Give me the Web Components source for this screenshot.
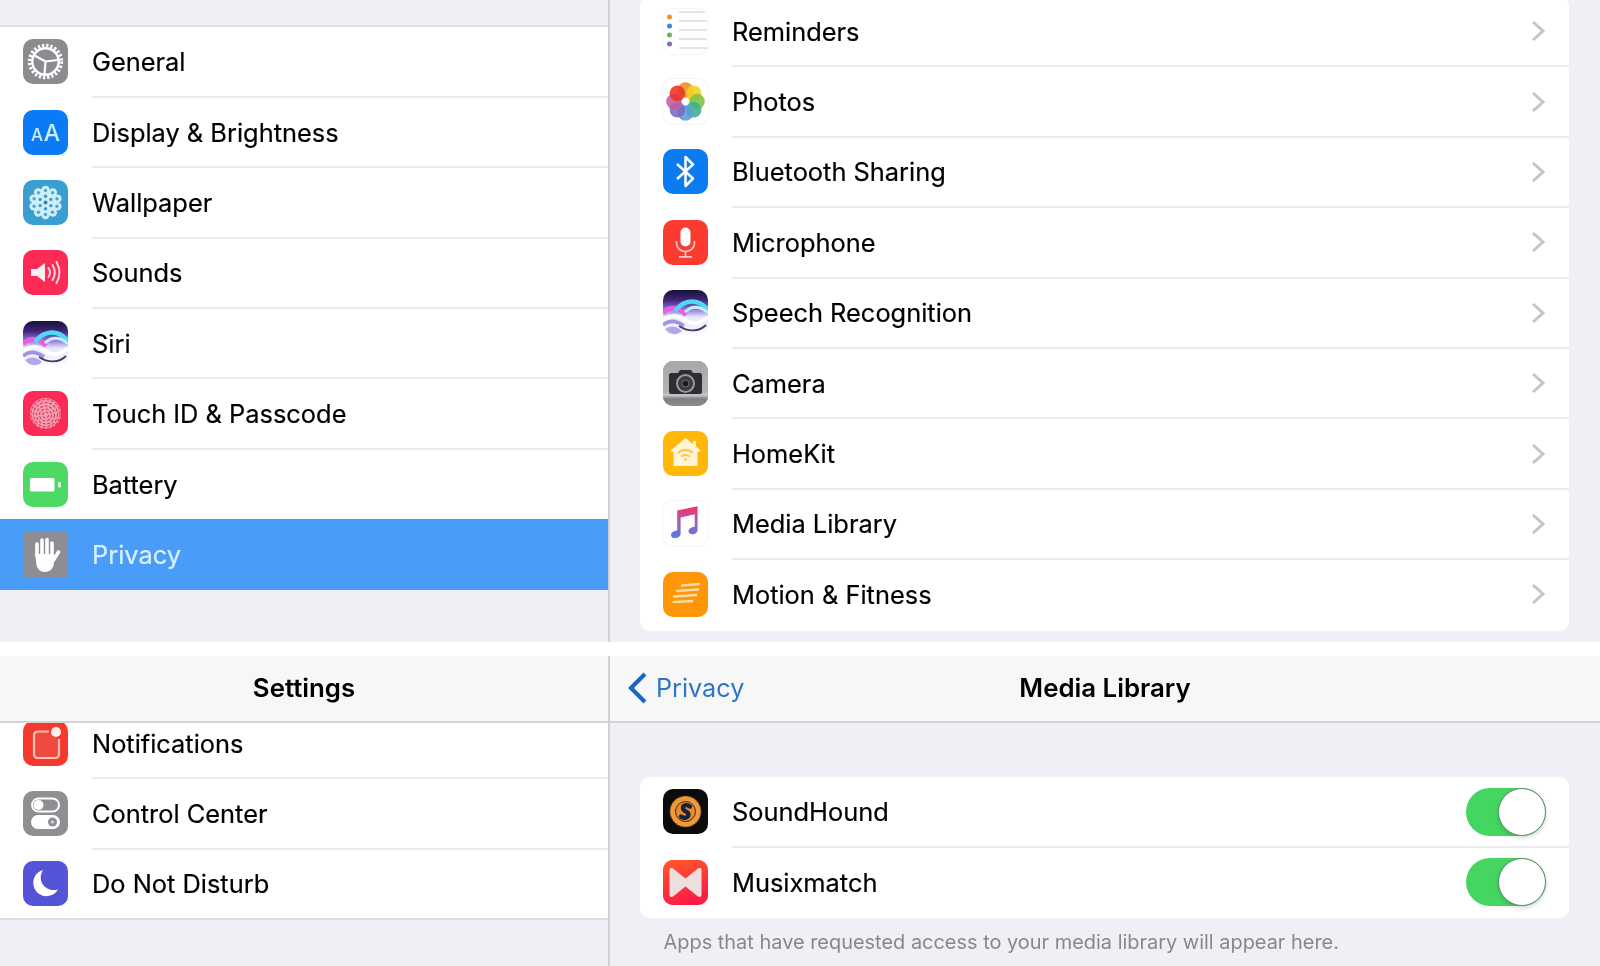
<!DOCTYPE html>
<html>
<head>
<meta charset="utf-8">
<title>Settings</title>
<style>
  html, body { margin: 0; height: 100%; background: #fff; overflow: hidden; }
  body { font-family: Inter, "Liberation Sans", sans-serif; color: #000; filter: blur(0.5px); }
  .band { height: 14px; }
</style>
</head>
<body>
<split-shot height="642">
  <settings-list slot="left" top="26.5">
    <settings-row icon="general">General</settings-row>
    <settings-row icon="display">Display &amp; Brightness</settings-row>
    <settings-row icon="wallpaper">Wallpaper</settings-row>
    <settings-row icon="sounds">Sounds</settings-row>
    <settings-row icon="siri">Siri</settings-row>
    <settings-row icon="touch">Touch ID &amp; Passcode</settings-row>
    <settings-row icon="battery" last>Battery</settings-row>
    <settings-row icon="privacy" selected last>Privacy</settings-row>
  </settings-list>
  <settings-card slot="right" shift="-4">
    <settings-row icon="reminders" chevron>Reminders</settings-row>
    <settings-row icon="photos" chevron>Photos</settings-row>
    <settings-row icon="bluetooth" chevron>Bluetooth Sharing</settings-row>
    <settings-row icon="mic" chevron>Microphone</settings-row>
    <settings-row icon="siri" chevron>Speech Recognition</settings-row>
    <settings-row icon="camera" chevron>Camera</settings-row>
    <settings-row icon="home" chevron>HomeKit</settings-row>
    <settings-row icon="music" chevron>Media Library</settings-row>
    <settings-row icon="motion" chevron last>Motion &amp; Fitness</settings-row>
  </settings-card>
</split-shot>
<div class="band"></div>
<split-shot height="310">
  <nav-bar slot="left-nav"><span>Settings</span></nav-bar>
  <nav-bar slot="right-nav" back="Privacy"><span>Media Library</span></nav-bar>
  <settings-list slot="left" shift="-15" bottom-line>
    <settings-row icon="notifications">Notifications</settings-row>
    <settings-row icon="control">Control Center</settings-row>
    <settings-row icon="dnd" last>Do Not Disturb</settings-row>
  </settings-list>
  <settings-card slot="right" top="53.5">
    <settings-row icon="soundhound" toggle>SoundHound</settings-row>
    <settings-row icon="musixmatch" toggle last>Musixmatch</settings-row>
    <span slot="footer">Apps that have requested access to your media library will appear here.</span>
  </settings-card>
</split-shot>

<script>
// every icon is drawn on a 45x45 box
const petals = (n, dist, r, fn, start = -Math.PI / 2) => {
  let out = "";
  for (let i = 0; i < n; i++) {
    const a = start + (i / n) * Math.PI * 2;
    out += fn(22.5 + Math.cos(a) * dist, 22.5 + Math.sin(a) * dist, r, i);
  }
  return out;
};

const siriArt = `
  <defs>
    <linearGradient id="s" x1="0" y1="0" x2="0" y2="1">
      <stop offset="0" stop-color="#17123c"/><stop offset=".22" stop-color="#3d2478"/>
      <stop offset=".42" stop-color="#8d6fd8"/><stop offset=".6" stop-color="#e8e6fa"/><stop offset="1" stop-color="#fbfbff"/>
    </linearGradient>
  </defs>
  <rect width="45" height="45" fill="url(#s)"/>
  <path d="M0 23C8 15 15 17 23 25" stroke="#ec5ae6" stroke-width="4.500" fill="none"/>
  <path d="M12 21C22 8 36 9 45 20" stroke="#52d8f5" stroke-width="4.500" fill="none"/>
  <path d="M22 22C29 15 38 16 45 23" stroke="#bdf2fb" stroke-width="3" fill="none"/>
  <path d="M0 30C8 24 15 25 24 31C30 35 38 33 45 27" stroke="#fff" stroke-width="4" fill="none"/>
  <path d="M0 35C7 29 14 31 21 36" stroke="#9f93e0" stroke-width="3.500" fill="none"/>
  <path d="M16 36C25 42 36 42 43 35" stroke="#3b4068" stroke-width="1.800" fill="none"/>
  <path d="M2 39C8 35 14 36 19 41C13 46 7 45 2 39Z" fill="#b3a7e8"/>`;

const ICONS = {
  general: { bg: "#8c8c90", art: `
    <circle cx="22.5" cy="22.5" r="16" fill="none" stroke="#fff" stroke-width="3.4" stroke-dasharray="2.300 1.900"/>
    <circle cx="22.5" cy="22.5" r="13.200" fill="none" stroke="#fff" stroke-width="2.400"/>
    <path d="M22.5 22.5L11.500 16.500M22.5 22.5L35 21M22.5 22.5L21.500 35" stroke="#fff" stroke-width="2.200"/>` },
  display: { bg: "#0a7bf5", art: `
    <text x="14" y="31" font-size="17" font-weight="500" text-anchor="middle" fill="#cdeeff" font-family="Inter, sans-serif">A</text>
    <text x="29" y="31" font-size="23" font-weight="500" text-anchor="middle" fill="#cdeeff" font-family="Inter, sans-serif">A</text>` },
  wallpaper: { bg: "#3a9fd0", art: `<circle cx="22.5" cy="22.5" r="13" fill="#cdeff7"/>` +
      petals(10, 12.500, 4.200, (x, y, r) => `<circle cx="${x}" cy="${y}" r="${r}" fill="#cdeff7"/>`) +
      petals(10, 12, 1.700, (x, y, r) => `<circle cx="${x}" cy="${y}" r="${r}" fill="#4ea9cf"/>`) +
      petals(6, 6.200, 1.700, (x, y, r) => `<circle cx="${x}" cy="${y}" r="${r}" fill="#4098c4"/>`) +
      `<circle cx="22.5" cy="22.5" r="2" fill="#2f86b4"/>` },
  sounds: { bg: "#fb2b55", art: `
    <path d="M8 19H14L22 13V32L14 26H8Z" fill="#ffeef1"/>
    <path d="M25.500 18C27.500 21 27.500 24 25.500 27M29.500 15C32.500 20 32.500 25 29.500 30M33.500 12C37.500 19 37.500 26 33.500 33" fill="none" stroke="#ffd5dd" stroke-width="2" stroke-linecap="round"/>` },
  siri: { bg: "#fff", art: siriArt },
  touch: { bg: "#fb2b55", art: `
    <circle cx="22.5" cy="22.5" r="15.500" fill="#f29db0"/>
    <g fill="none" stroke="#e2375e" stroke-width="1.100" stroke-dasharray="3 1.600">
      <circle cx="22.5" cy="24" r="3"/><circle cx="22.5" cy="24" r="6"/><circle cx="22.5" cy="24" r="9"/><circle cx="22.5" cy="23.5" r="12"/><circle cx="22.5" cy="23" r="14.500"/>
    </g>` },
  battery: { bg: "#4cd964", art: `
    <rect x="7" y="16" width="24.500" height="13.500" rx="1.500" fill="#fff"/>
    <rect x="35" y="20" width="3" height="5.500" rx="1" fill="#d9fbe0"/>` },
  privacy: { bg: "#8d8d93", radius: "3px", art: `
    <g stroke="#fff" stroke-width="3.600" stroke-linecap="round" fill="none">
      <path d="M14 24V12M19 22V8M24 22V7.500M29 23V11"/>
      <path d="M30.500 28L35.500 20"/>
    </g>
    <path d="M12.200 22H31V30C31 36 27 40 22 40C17 40 14.500 37 13.500 33Z" fill="#fff"/>` },
  notifications: { bg: "#f7382c", art: `
    <path d="M26 10.500H15C12.500 10.500 11 12 11 14.500V33C11 35.500 12.500 37 15 37H32C34.500 37 36 35.500 36 33V18" fill="#f04a3e" stroke="#ffc4bc" stroke-width="2.200"/>
    <circle cx="33" cy="11" r="5" fill="#ffeeee"/>` },
  control: { bg: "#8e8e93", art: `
    <rect x="9" y="7.500" width="27" height="13" rx="6.500" fill="none" stroke="#fff" stroke-width="2"/>
    <circle cx="15.500" cy="14" r="5" fill="#fff"/>
    <rect x="8" y="24" width="29" height="14" rx="7" fill="#fff"/>
    <circle cx="29.500" cy="31" r="4.500" fill="#8e8e93"/>
    <circle cx="29.500" cy="31" r="1.500" fill="#ddd"/>` },
  dnd: { bg: "#5553d8", art: `
    <path d="M20 9C13 11 9.500 17 10.500 24C11.500 31 18 36 25 35C29.500 34.500 33 32 35 28.500C27.500 30.500 21 27 18.500 21C17 17 17.500 13 20 9Z" fill="#fff"/>` },
  reminders: { bg: "#fff", tile: true, art: `
    <g stroke="#dcdce0" stroke-width="1.400"><path d="M16 3H44M16 12H44M16 21H44M16 30H44M16 39H44"/></g>
    <circle cx="6.500" cy="8" r="2.500" fill="#f39323"/><circle cx="6.500" cy="17" r="2.500" fill="#2c8fe0"/>
    <circle cx="6.500" cy="26" r="2.500" fill="#6db34f"/><circle cx="6.500" cy="35" r="2.500" fill="#8e6bb5"/>` },
  photos: { bg: "#fff", tile: true, art: petals(8, 11.500, 7.800, (x, y, r, i) =>
      `<circle cx="${x}" cy="${y}" r="${r}" fill="${["#f08a20","#f5cf1c","#82c23c","#3fae8c","#5b9bd8","#7d68c0","#c25f9c","#e8342a"][i]}" opacity=".88"/>`) +
      `<circle cx="22.500" cy="22.500" r="1.600" fill="#fff"/>` },
  bluetooth: { bg: "#0a7bf0", art: `
    <path d="M14 15L30 29.500L22.500 37V8L30 15.500L14 30" fill="none" stroke="#fff" stroke-width="2.500" stroke-linejoin="round"/>` },
  mic: { bg: "#fb3a30", art: `
    <rect x="17.500" y="7.500" width="10" height="19" rx="5" fill="#fff"/>
    <path d="M13.500 21V23C13.500 28 17.500 31.500 22.500 31.500C27.500 31.500 31.500 28 31.500 23V21" fill="none" stroke="#ffc9c3" stroke-width="1.700"/>
    <path d="M22.500 31.500V36.500M16 36.800H29" stroke="#ffc9c3" stroke-width="1.700"/>` },
  camera: { bg: "#888", art: `
    <defs><linearGradient id="c" x1="0" y1="0" x2="0" y2="1">
      <stop offset="0" stop-color="#a8a8ac"/><stop offset=".7" stop-color="#b4b4b8"/><stop offset=".76" stop-color="#c8c8cc"/><stop offset=".84" stop-color="#808084"/><stop offset="1" stop-color="#8e8e92"/>
    </linearGradient></defs>
    <rect width="45" height="45" fill="url(#c)"/>
    <path d="M6 14C6 13 7 12 8 12H15L17 9H28L30 12H37C38 12 39 13 39 14V31C39 32 38 33 37 33H8C7 33 6 32 6 31Z" fill="#2e2e30"/>
    <circle cx="22.500" cy="22.500" r="8.500" fill="#3c3c3e" stroke="#9a9a9c" stroke-width="2"/>
    <circle cx="22.500" cy="22.500" r="3.500" fill="#1b1b1d" stroke="#777" stroke-width="1"/>` },
  home: { bg: "#ffb70a", art: `
    <path d="M22.500 7L30 13V10H33V15.500L38 20L34.500 21V35H10.500V21L7 20Z" fill="#fff4d8"/>
    <path d="M15 22C19 18 26 18 30 22M18 25.500C21 23.500 24 23.500 27 25.500" fill="none" stroke="#ffc63f" stroke-width="1.800"/>
    <circle cx="22.500" cy="28.500" r="1.400" fill="#ffc63f"/>` },
  music: { bg: "#fff", tile: true, art: `
    <defs><linearGradient id="m" x1="0" y1="0" x2="0" y2="1">
      <stop offset="0" stop-color="#f8305c"/><stop offset=".5" stop-color="#a85cbc"/><stop offset="1" stop-color="#4d7fe0"/>
    </linearGradient></defs>
    <path transform="translate(-3.300 -5) scale(1.130 1.080)" d="M15.500 13.500L33.500 9.500V31.500C33.500 34 31 35.500 29 35.500C26.500 35.500 25.500 34 25.500 32.500C25.500 30.500 27.500 29 31 28.500V17L18.500 20V35C18.500 37.500 16 39 13.500 39C11.500 39 10 37.500 10 36C10 34 12 32.500 15.500 32Z" fill="url(#m)"/>` },
  motion: { bg: "#ff9508", art: `
    <g stroke="#ffdfa6" stroke-width="2.400" stroke-linecap="round">
      <path d="M19 13.500L36 12M14 19L35 17.500M11 24.500L33 23M10.500 30L29 29"/>
    </g>` },
  soundhound: { bg: "#0b0b0c", art: `
    <circle cx="22.500" cy="22.500" r="15.500" fill="#f0993a"/>
    <circle cx="22.500" cy="22.500" r="15.500" fill="none" stroke="#6a4520" stroke-width="1.200" stroke-dasharray="1.500 1.500"/>
    <circle cx="22.500" cy="22.500" r="10" fill="#e58b2a" stroke="#3d2a12" stroke-width="1"/>
    <path d="M27 17.500C24 15 19.500 16 20 19.500C20.500 23 25.500 22 25.500 25.500C25.500 28.500 21 30 18 27.500" fill="none" stroke="#16233f" stroke-width="4.300" stroke-linecap="round"/>` },
  musixmatch: { bg: "#ff3838", art: `
    <defs><linearGradient id="x" x1="0" y1="0" x2=".3" y2="1">
      <stop offset="0" stop-color="#ff5a28"/><stop offset="1" stop-color="#fb1d45"/>
    </linearGradient></defs>
    <rect width="45" height="45" fill="url(#x)"/>
    <path d="M6.500 10C6.500 8 8.500 7.500 10 8.500L22.500 18.500L35 8.500C36.500 7.500 38.500 8 38.500 10V35C38.500 37 36.500 37.500 35 36.500L22.500 26.500L10 36.500C8.500 37.500 6.500 37 6.500 35Z" fill="#eedfdd"/>` }
};

class AppIcon extends HTMLElement {
  connectedCallback() {
    const icon = ICONS[this.getAttribute("name")];
    const shadow = this.attachShadow({ mode: "open" });
    shadow.innerHTML = `
      <style>
        :host { display: block; width: 45px; height: 45px; flex: none; }
        div { width: 45px; height: 45px; border-radius: ${icon.radius || "10px"}; overflow: hidden; background: ${icon.bg}; ${icon.tile ? "box-shadow: 0 0 0 1px #f5f5f7;" : ""} }
        svg { display: block; }
      </style>
      <div><svg width="45" height="45" viewBox="0 0 45 45">${icon.art}</svg></div>`;
  }
}

class IosToggle extends HTMLElement {
  constructor() {
    super();
    this.attachShadow({ mode: "open" }).innerHTML = `
      <style>
        :host { display: flex; justify-content: flex-end; width: 80px; height: 48px; border-radius: 24px; background: #45d561; flex: none; }
        div { width: 48px; height: 48px; box-sizing: border-box; border-radius: 50%; background: #fff; border: 1.500px solid #5d8f6b; box-shadow: 0 2px 4px rgba(0,0,0,.16); }
      </style>
      <div></div>`;
  }
}

class SettingsRow extends HTMLElement {
  connectedCallback() {
    const extra = this.hasAttribute("chevron")
      ? `<svg class="chev" width="14" height="22" viewBox="0 0 14 22"><path d="M2 2L12 11L2 20" fill="none" stroke="#c5c5c9" stroke-width="3"/></svg>`
      : this.hasAttribute("toggle") ? `<ios-toggle></ios-toggle>` : "";
    const shadow = this.attachShadow({ mode: "open" });
    shadow.innerHTML = `
      <style>
        :host { display: flex; align-items: center; height: 70.4px; padding-left: 23px; font-size: 25.4px; color: #000; -webkit-text-stroke: 0.2px; }
        :host([selected]) { background: #4a9cf9; color: #d9f1ff; }
        .body { flex: 1; height: 100%; margin-left: 24px; display: flex; align-items: center; justify-content: space-between; box-shadow: 0 1px 0 #ececef, inset 0 -1px 0 #ececef; }
        :host([last]) .body { box-shadow: none; }
        .chev { margin-right: 24px; }
        ios-toggle { margin-right: 23px; }
      </style>
      <app-icon name="${this.getAttribute("icon")}"></app-icon>
      <div class="body"><span><slot></slot></span>${extra}</div>`;
  }
}

class SettingsList extends HTMLElement {
  connectedCallback() {
    const top = this.getAttribute("top") || 0;
    const shift = this.getAttribute("shift") || 0;
    const shadow = this.attachShadow({ mode: "open" });
    shadow.innerHTML = `
      <style>
        :host { display: block; overflow: hidden; padding-top: ${top}px; }
        .rows { background: #fff; margin-top: ${shift}px; box-shadow: 0 -1.5px 0 #dadade; }
        :host([bottom-line]) .rows { box-shadow: 0 1px 0 #dcdce1, inset 0 -1px 0 #dcdce1; margin-bottom: 3px; }
      </style>
      <div class="rows"><slot></slot></div>`;
  }
}

class SettingsCard extends HTMLElement {
  connectedCallback() {
    const top = this.getAttribute("top") || 0;
    const shift = this.getAttribute("shift") || 0;
    const shadow = this.attachShadow({ mode: "open" });
    shadow.innerHTML = `
      <style>
        :host { display: block; overflow: hidden; padding: ${top}px 31px 0 30px; }
        .card { background: #fff; border-radius: 10px; margin-top: ${shift}px; padding-bottom: 1px; }
        .foot { margin: 11.5px 0 0 23.5px; font-size: 19.94px; line-height: 24px; color: #88888c; white-space: nowrap; }
      </style>
      <div class="card"><slot></slot></div>
      <div class="foot"><slot name="footer"></slot></div>`;
  }
}

class NavBar extends HTMLElement {
  connectedCallback() {
    const back = this.getAttribute("back");
    const shadow = this.attachShadow({ mode: "open" });
    shadow.innerHTML = `
      <style>
        :host { display: grid; grid-template-columns: 1fr auto 1fr; align-items: center; height: 65px; background: #f7f7f8; border-bottom: 2px solid #d3d3d7; font-size: 25.8px; font-weight: 600; color: #000; }
        div { position: relative; top: -1px; }
        .back { display: flex; align-items: center; gap: 8px; padding-left: 17px; font-size: 25.2px; font-weight: 400; color: #2c76c4; }
        svg { display: block; }
      </style>
      <div class="back">${back ? `<svg width="21" height="34" viewBox="0 0 21 34"><path d="M18 3L4 17L18 31" fill="none" stroke="#1767c6" stroke-width="4.200"/></svg><span>${back}</span>` : ""}</div>
      <div><slot></slot></div>
      <div></div>`;
  }
}

class SplitShot extends HTMLElement {
  connectedCallback() {
    const shadow = this.attachShadow({ mode: "open" });
    shadow.innerHTML = `
      <style>
        :host { display: grid; grid-template-columns: 608px 1fr; height: ${this.getAttribute("height")}px; overflow: hidden; background: #efeff5; }
        .pane { overflow: hidden; min-width: 0; }
        .right { border-left: 2px solid #d0d0d5; }
      </style>
      <div class="pane"><slot name="left-nav"></slot><slot name="left"></slot></div>
      <div class="pane right"><slot name="right-nav"></slot><slot name="right"></slot></div>`;
  }
}

customElements.define("app-icon", AppIcon);
customElements.define("ios-toggle", IosToggle);
customElements.define("settings-row", SettingsRow);
customElements.define("settings-list", SettingsList);
customElements.define("settings-card", SettingsCard);
customElements.define("nav-bar", NavBar);
customElements.define("split-shot", SplitShot);
</script>
</body>
</html>
